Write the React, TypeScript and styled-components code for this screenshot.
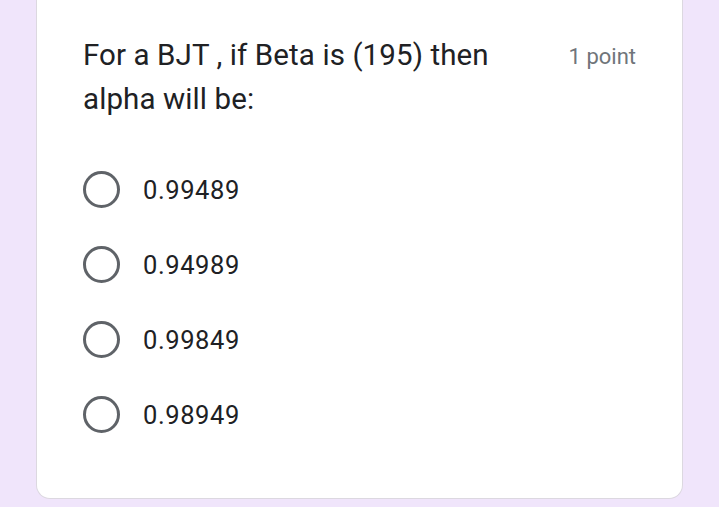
import React from "react"
import styled, { createGlobalStyle } from "styled-components"

const GlobalStyle = createGlobalStyle`
	html, body {
		margin: 0;
		padding: 0;
		background: #f0e5fb;
		font-family: Roboto, "Liberation Sans", Arial, sans-serif;
	}
`

const Page = styled.div`
	width: 719px;
	height: 507px;
	box-sizing: border-box;
	padding: 0 36px 8px 36px;
	overflow: hidden;
`

const Card = styled.div`
	height: 499px;
	box-sizing: border-box;
	background: #fff;
	border: 1px solid #dcd8e0;
	border-top: none;
	border-radius: 0 0 14px 14px;
	padding: 33px 46px 0 46px;
`

const Header = styled.div`
	display: flex;
	justify-content: space-between;
	align-items: flex-start;
`

const Question = styled.div`
	font-size: 29.5px;
	letter-spacing: 0.1px;
	line-height: 44px;
	color: #202124;
	max-width: 460px;
`

const Points = styled.div`
	padding-top: 2px;
	font-size: 22px;
	line-height: 44px;
	color: #70757a;
	white-space: nowrap;
`

const Options = styled.div`
	display: flex;
	flex-direction: column;
	margin-top: 31px;
`

const Option = styled.label`
	display: flex;
	align-items: center;
	height: 75px;
	gap: 23px;
	cursor: pointer;
`

const Radio = styled.span`
	width: 37px;
	height: 37px;
	box-sizing: border-box;
	border: 3.5px solid #5f6368;
	border-radius: 50%;
	flex-shrink: 0;
`

const OptionText = styled.span`
	font-size: 25.5px;
	letter-spacing: 0.6px;
	color: #202124;
`

const answers = ["0.99489", "0.94989", "0.99849", "0.98949"]

export default function App() {
	return (
		<Page>
			<GlobalStyle />
			<Card>
				<Header>
					<Question>For a BJT , if Beta is (195) then alpha will be:</Question>
					<Points>1 point</Points>
				</Header>
				<Options>
					{answers.map((a) => (
						<Option key={a}>
							<Radio />
							<OptionText>{a}</OptionText>
						</Option>
					))}
				</Options>
			</Card>
		</Page>
	)
}
